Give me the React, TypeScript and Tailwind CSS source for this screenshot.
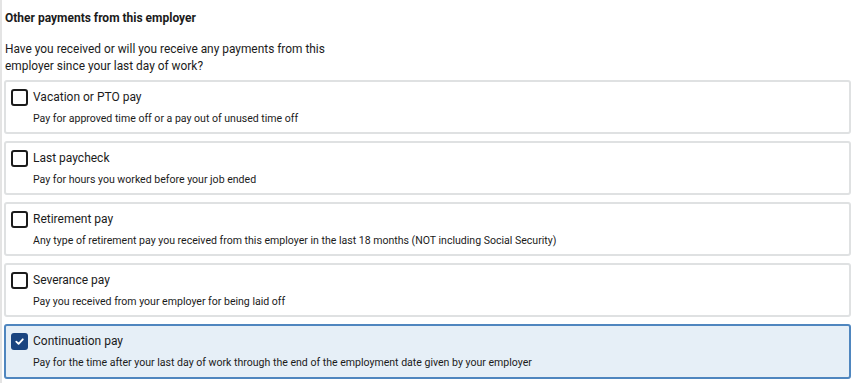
import React from "react";

const items = [
  { label: "Vacation or PTO pay", desc: "Pay for approved time off or a pay out of unused time off", checked: false },
  { label: "Last paycheck", desc: "Pay for hours you worked before your job ended", checked: false },
  { label: "Retirement pay", desc: "Any type of retirement pay you received from this employer in the last 18 months (NOT including Social Security)", checked: false },
  { label: "Severance pay", desc: "Pay you received from your employer for being laid off", checked: false },
  { label: "Continuation pay", desc: "Pay for the time after your last day of work through the end of the employment date given by your employer", checked: true },
];

export default function App() {
  return (
    <div className="w-[856px] h-[383px] bg-white border-l-2 border-[#e4e4e4] overflow-hidden" style={{ fontFamily: "Roboto, 'Noto Sans', sans-serif" }}>
      <div className="pl-[2px] pr-[5px] pt-[10px] text-[#1b1b1b]">
        <h2 className="text-[12px] font-bold leading-[17px] pl-[1px]">Other payments from this employer</h2>
        <p className="mt-[14px] text-[11.9px] leading-[17px] w-[330px] pl-[1px]">
          Have you received or will you receive any payments from this employer since your last day of work?
        </p>
        <div className="mt-[5px] flex flex-col gap-[7px]">
          {items.map((it) => (
            <div
              key={it.label}
              className={
                it.checked
                  ? "h-[55px] rounded-[3px] border-2 border-[#4f86bf] bg-[#e6eff7] px-[5px] pt-[6px]"
                  : "h-[54px] rounded-[3px] border-2 border-[#dfe1e2] bg-white px-[5px] pt-[6px]"
              }
            >
              <div className="flex items-center gap-[5px] h-[19px]">
                {it.checked ? (
                  <span className="w-[17px] h-[17px] rounded-[3px] bg-[#1a4480] flex items-center justify-center">
                    <svg width="11" height="11" viewBox="0 0 12 12">
                      <path d="M2.5 6.2 L5 8.6 L9.6 3.6" fill="none" stroke="white" strokeWidth="2" strokeLinecap="round" strokeLinejoin="round" />
                    </svg>
                  </span>
                ) : (
                  <span className="w-[17px] h-[17px] rounded-[3px] border-2 border-[#1b1b1b] bg-white" />
                )}
                <span className="text-[12px] leading-[17px]">{it.label}</span>
              </div>
              <div className="pl-[22px] mt-[5px] text-[10.55px] leading-[14px]">{it.desc}</div>
            </div>
          ))}
        </div>
      </div>
    </div>
  );
}
